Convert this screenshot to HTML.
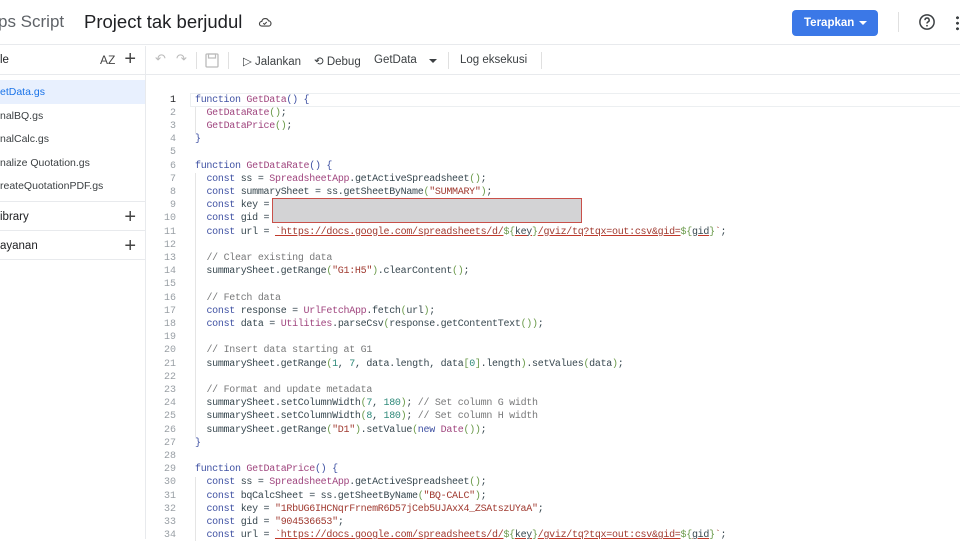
<!DOCTYPE html>
<html><head><meta charset="utf-8"><style>
*{box-sizing:border-box;margin:0;padding:0}
body{width:960px;height:539px;overflow:hidden;background:#fff;font-family:"Liberation Sans",Arial,sans-serif;color:#202124;position:relative}
.hdr{position:absolute;left:0;top:0;width:960px;height:45px;border-bottom:1px solid #e8eaed}
.t1{position:absolute;left:-2px;top:12px;font-size:17px;color:#5f6368}
.t2{position:absolute;left:84px;top:11px;font-size:18.5px;color:#202124}
.btn{position:absolute;left:792px;top:10px;width:86px;height:26px;background:#3b78e7;border-radius:4px;color:#fff;font-size:11.5px;font-weight:bold;line-height:26px;padding-left:12px}
.btn i{position:absolute;left:67px;top:11px;border-left:4px solid transparent;border-right:4px solid transparent;border-top:4px solid #fff}
.vs{position:absolute;left:898px;top:12px;width:1px;height:20px;background:#e0e0e0}
.side{position:absolute;left:0;top:46px;width:146px;height:493px;border-right:1px solid #e8eaed}
.sh{height:29px;border-bottom:1px solid #e8eaed;font-size:11.5px;line-height:29px;position:relative}
.f{height:23.5px;font-size:10.5px;line-height:25px;color:#3c4043}
.f.a{background:#e8f0fe;color:#1a73e8;margin-top:5px;width:145px}
.sec{height:29px;border-top:1px solid #e8eaed;font-size:11.5px;line-height:30px;position:relative;color:#202124}
.plus{position:absolute;right:9px;top:0;font-size:20px;color:#444;font-weight:300}
.tb{position:absolute;left:146px;top:46px;width:814px;height:29px;border-bottom:1px solid #e8eaed;font-size:11.5px;color:#3c4043}
.tb span{position:absolute;top:8px}
.sep{position:absolute;top:6px;width:1px;height:17px;background:#e0e0e0}
.code{position:absolute;left:195px;top:93.5px;font-family:"Liberation Mono",monospace;font-size:10px;letter-spacing:-0.29px;line-height:13.2px;color:#37474f;white-space:pre}
.ln{position:absolute;left:150px;top:93.5px;width:26px;text-align:right;font-family:"Liberation Mono",monospace;font-size:10px;line-height:13.2px;color:#9aa0a6;white-space:pre}
.k{color:#3f51a3}.fn{color:#a0467f}.s{color:#a03a30}.n{color:#2f8a7a}.p{color:#6a9a4a}.c{color:#78797a}
.u{text-decoration:underline;text-decoration-color:#c0392b}
.cur{position:absolute;left:190px;top:93px;width:770px;height:14px;border:1px solid #eceff1;border-right:none}
.red{position:absolute;left:272px;top:198px;width:310px;height:25px;background:#d3d3d5;border:1.3px solid #c9504a}
.g1{position:absolute;left:195px;width:1px;background:#e5e5e5}
</style></head><body>
<div class="hdr">
<div class="t1">ps Script</div>
<div class="t2">Project tak berjudul</div>
<svg style="position:absolute;left:258px;top:15px" width="14" height="14" viewBox="0 0 24 24"><path d="M6.5 19h11a4.5 4.5 0 0 0 .5-9 6 6 0 0 0-11.5 1A4 4 0 0 0 6.5 19z" fill="none" stroke="#444" stroke-width="2"/><path d="M9 14l2 2 4-4" fill="none" stroke="#444" stroke-width="1.8"/></svg>
<div class="btn">Terapkan<i></i></div>
<div class="vs"></div>
<svg style="position:absolute;left:918px;top:13px" width="18" height="18" viewBox="0 0 24 24"><circle cx="12" cy="12" r="9.5" fill="none" stroke="#3c4043" stroke-width="2"/><path d="M9.3 9.5a2.8 2.8 0 1 1 3.8 2.6c-.8.4-1.1.9-1.1 1.9" fill="none" stroke="#3c4043" stroke-width="2"/><circle cx="12" cy="17" r="1.2" fill="#3c4043"/></svg>
<div style="position:absolute;left:956px;top:15px;width:3px;height:16px;background:radial-gradient(circle,#3c4043 1.4px,transparent 1.6px) 0 0/3px 5.5px"></div>
</div>
<div class="side">
<div class="sh">le<span style="position:absolute;left:100px;top:0;font-size:12px;color:#444">AZ</span><span class="plus" style="top:-1px">+</span></div>
<div class="f a">etData.gs</div>
<div class="f">nalBQ.gs</div>
<div class="f">nalCalc.gs</div>
<div class="f">nalize Quotation.gs</div>
<div class="f">reateQuotationPDF.gs</div>
<div class="sec" style="margin-top:3px">ibrary<span class="plus">+</span></div>
<div class="sec">ayanan<span class="plus">+</span></div>
<div class="sec" style="height:1px"></div>
</div>
<div class="tb">
<span style="left:9px;color:#bbb;font-size:13px;top:5px">↶</span>
<span style="left:30px;color:#bbb;font-size:13px;top:5px">↷</span>
<div class="sep" style="left:50px"></div>
<svg style="position:absolute;left:59px;top:7px" width="14" height="15" viewBox="0 0 14 15"><rect x="1" y="1" width="12" height="13" rx="1" fill="none" stroke="#bbb" stroke-width="1.3"/><rect x="3.5" y="1" width="7" height="4" fill="none" stroke="#bbb" stroke-width="1.2"/></svg>
<div class="sep" style="left:82px"></div>
<span style="left:97px">▷ Jalankan</span>
<span style="left:168px">⟲ Debug</span>
<span style="left:228px">GetData</span>
<i style="position:absolute;left:283px;top:13px;border-left:4px solid transparent;border-right:4px solid transparent;border-top:4px solid #3c4043"></i>
<div class="sep" style="left:302px"></div>
<span style="left:314px">Log eksekusi</span>
<div class="sep" style="left:395px"></div>
</div>
<div class="cur"></div>
<div class="g1" style="top:107px;height:26px"></div>
<div class="g1" style="top:173px;height:264px"></div>
<div class="g1" style="top:477px;height:64px"></div>
<div class="ln"><span style="color:#202124">1</span>
2
3
4
5
6
7
8
9
10
11
12
13
14
15
16
17
18
19
20
21
22
23
24
25
26
27
28
29
30
31
32
33
34</div>
<div class="code"><span class="k">function</span> <span class="fn">GetData</span><span class="k">() {</span>
  <span class="fn">GetDataRate</span><span class="p">()</span>;
  <span class="fn">GetDataPrice</span><span class="p">()</span>;
<span class="k">}</span>

<span class="k">function</span> <span class="fn">GetDataRate</span><span class="k">() {</span>
  <span class="k">const</span> ss = <span class="fn">SpreadsheetApp</span>.getActiveSpreadsheet<span class="p">()</span>;
  <span class="k">const</span> summarySheet = ss.getSheetByName<span class="p">(</span><span class="s">"SUMMARY"</span><span class="p">)</span>;
  <span class="k">const</span> key =
  <span class="k">const</span> gid =
  <span class="k">const</span> url = <span class="s u">`https://docs.google.com/spreadsheets/d/</span><span class="p">${</span><span class="u">key</span><span class="p">}</span><span class="s u">/gviz/tq?tqx=out:csv&amp;gid=</span><span class="p">${</span><span class="u">gid</span><span class="p">}</span><span class="s">`</span>;

  <span class="c">// Clear existing data</span>
  summarySheet.getRange<span class="p">(</span><span class="s">"G1:H5"</span><span class="p">)</span>.clearContent<span class="p">()</span>;

  <span class="c">// Fetch data</span>
  <span class="k">const</span> response = <span class="fn">UrlFetchApp</span>.fetch<span class="p">(</span>url<span class="p">)</span>;
  <span class="k">const</span> data = <span class="fn">Utilities</span>.parseCsv<span class="p">(</span>response.getContentText<span class="p">())</span>;

  <span class="c">// Insert data starting at G1</span>
  summarySheet.getRange<span class="p">(</span><span class="n">1</span>, <span class="n">7</span>, data.length, data<span class="p">[</span><span class="n">0</span><span class="p">]</span>.length<span class="p">)</span>.setValues<span class="p">(</span>data<span class="p">)</span>;

  <span class="c">// Format and update metadata</span>
  summarySheet.setColumnWidth<span class="p">(</span><span class="n">7</span>, <span class="n">180</span><span class="p">)</span>; <span class="c">// Set column G width</span>
  summarySheet.setColumnWidth<span class="p">(</span><span class="n">8</span>, <span class="n">180</span><span class="p">)</span>; <span class="c">// Set column H width</span>
  summarySheet.getRange<span class="p">(</span><span class="s">"D1"</span><span class="p">)</span>.setValue<span class="p">(</span><span class="k">new</span> <span class="fn">Date</span><span class="p">())</span>;
<span class="k">}</span>

<span class="k">function</span> <span class="fn">GetDataPrice</span><span class="k">() {</span>
  <span class="k">const</span> ss = <span class="fn">SpreadsheetApp</span>.getActiveSpreadsheet<span class="p">()</span>;
  <span class="k">const</span> bqCalcSheet = ss.getSheetByName<span class="p">(</span><span class="s">"BQ-CALC"</span><span class="p">)</span>;
  <span class="k">const</span> key = <span class="s">"1RbUG6IHCNqrFrnemR6D57jCeb5UJAxX4_ZSAtszUYaA"</span>;
  <span class="k">const</span> gid = <span class="s">"904536653"</span>;
  <span class="k">const</span> url = <span class="s u">`https://docs.google.com/spreadsheets/d/</span><span class="p">${</span><span class="u">key</span><span class="p">}</span><span class="s u">/gviz/tq?tqx=out:csv&amp;gid=</span><span class="p">${</span><span class="u">gid</span><span class="p">}</span><span class="s">`</span>;</div>
<div class="red"></div>
</body></html>
